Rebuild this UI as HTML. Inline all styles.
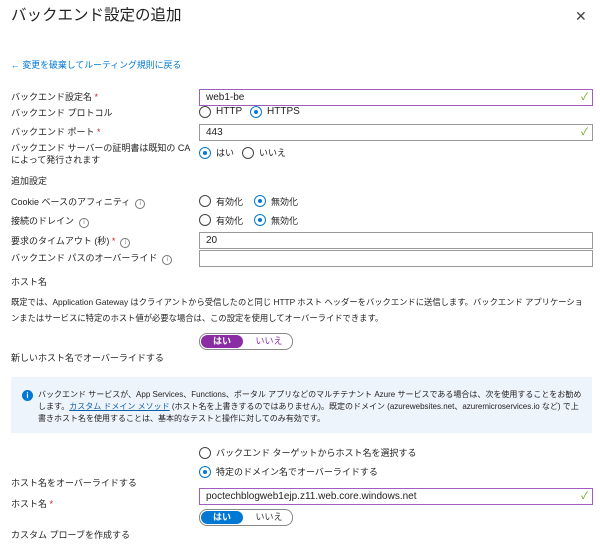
<!DOCTYPE html>
<html><head><meta charset="utf-8"><style>
body{margin:0;width:600px;height:552px;background:#fff;font-family:"Liberation Sans","Noto Sans CJK JP",sans-serif;color:#222;position:relative;overflow:hidden}
.a{position:absolute;white-space:nowrap;font-size:9px;line-height:12px}
.req{color:#c4262e}
.inp{position:absolute;left:199px;width:386px;height:15px;border:1px solid #999;font-size:10px;line-height:15px;padding-left:6px;box-sizing:content-box}
.chk{position:absolute;right:4px;top:0;color:#57a300;font-size:10px}
.r{position:absolute;width:12px;height:12px;border:1px solid #444;border-radius:50%;box-sizing:border-box}
.r.on{border-color:#0078d4}
.r.on::after{content:"";position:absolute;left:3px;top:3px;width:4px;height:4px;border-radius:50%;background:#0078d4}
.i{display:inline-block;width:8px;height:8px;border:1px solid #777;border-radius:50%;font-size:6px;line-height:8px;text-align:center;color:#777;margin-left:5px;vertical-align:0}
.tg{position:absolute;left:199px;width:92px;height:15px;border:1px solid #888;border-radius:8px;font-size:9px}
.tg span{position:absolute;top:1px;height:13px;line-height:13px;text-align:center;width:42px;border-radius:7px}
</style></head><body>
<div class="a" style="left:11px;top:5px;font-size:15.5px;line-height:22px;color:#222">バックエンド設定の追加</div>
<div class="a" style="left:575px;top:7px;font-size:14px;line-height:18px;color:#444">✕</div>
<div class="a" style="left:11px;top:59px;color:#0078d4;font-size:8.9px">← 変更を破棄してルーティング規則に戻る</div>

<div class="a" style="left:11px;top:91px">バックエンド設定名 <span class="req">*</span></div>
<div class="inp" style="top:89px;border-color:#a05cbf">web1-be<span class="chk">✓</span></div>

<div class="a" style="left:11px;top:107px">バックエンド プロトコル</div>
<div class="r" style="left:199px;top:106px"></div><div class="a" style="left:216px;top:106px;font-size:10px">HTTP</div>
<div class="r on" style="left:250px;top:106px"></div><div class="a" style="left:267px;top:106px;font-size:10px">HTTPS</div>

<div class="a" style="left:11px;top:126px">バックエンド ポート <span class="req">*</span></div>
<div class="inp" style="top:124px">443<span class="chk">✓</span></div>

<div class="a" style="left:11px;top:142px">バックエンド サーバーの証明書は既知の CA</div>
<div class="a" style="left:11px;top:154px">によって発行されます</div>
<div class="r on" style="left:199px;top:147px"></div><div class="a" style="left:216px;top:147px">はい</div>
<div class="r" style="left:242px;top:147px"></div><div class="a" style="left:259px;top:147px">いいえ</div>

<div class="a" style="left:11px;top:175px">追加設定</div>

<div class="a" style="left:11px;top:196px">Cookie ベースのアフィニティ<span class="i">i</span></div>
<div class="r" style="left:199px;top:195px"></div><div class="a" style="left:216px;top:196px">有効化</div>
<div class="r on" style="left:254px;top:195px"></div><div class="a" style="left:271px;top:196px">無効化</div>

<div class="a" style="left:11px;top:215px">接続のドレイン<span class="i">i</span></div>
<div class="r" style="left:199px;top:214px"></div><div class="a" style="left:216px;top:215px">有効化</div>
<div class="r on" style="left:254px;top:214px"></div><div class="a" style="left:271px;top:215px">無効化</div>

<div class="a" style="left:11px;top:235px">要求のタイムアウト (秒) <span class="req">*</span><span class="i">i</span></div>
<div class="inp" style="top:232px">20</div>
<div class="a" style="left:11px;top:252px">バックエンド パスのオーバーライド<span class="i">i</span></div>
<div class="inp" style="top:250px"></div>

<div class="a" style="left:11px;top:276px">ホスト名</div>
<div class="a" style="left:11px;top:296px;font-size:8.3px">既定では、Application Gateway はクライアントから受信したのと同じ HTTP ホスト ヘッダーをバックエンドに送信します。バックエンド アプリケーショ</div>
<div class="a" style="left:11px;top:312px;font-size:8.3px">ンまたはサービスに特定のホスト値が必要な場合は、この設定を使用してオーバーライドできます。</div>

<div class="tg" style="top:333px"><span style="left:1px;background:#8a2da5;color:#fff;font-weight:bold">はい</span><span style="left:48px;color:#8a2da5">いいえ</span></div>
<div class="a" style="left:11px;top:352px">新しいホスト名でオーバーライドする</div>

<div style="position:absolute;left:11px;top:377px;width:581px;height:56px;background:#eef4fc"></div>
<div style="position:absolute;left:22px;top:390px;width:11px;height:11px;border-radius:50%;background:#0078d4;color:#fff;font-size:8px;line-height:11px;text-align:center;font-weight:bold">i</div>
<div class="a" style="left:38px;top:389px;font-size:8px">バックエンド サービスが、App Services、Functions、ポータル アプリなどのマルチテナント Azure サービスである場合は、次を使用することをお勧め</div>
<div class="a" style="left:38px;top:401px;font-size:8px">します。<span style="color:#0f5fa8;text-decoration:underline">カスタム ドメイン メソッド</span> (ホスト名を上書きするのではありません)。既定のドメイン (azurewebsites.net、azuremicroservices.io など) で上</div>
<div class="a" style="left:38px;top:413px;font-size:8px">書きホスト名を使用することは、基本的なテストと操作に対してのみ有効です。</div>

<div class="r" style="left:199px;top:447px"></div><div class="a" style="left:216px;top:447px">バックエンド ターゲットからホスト名を選択する</div>
<div class="r on" style="left:199px;top:466px"></div><div class="a" style="left:216px;top:466px">特定のドメイン名でオーバーライドする</div>
<div class="a" style="left:11px;top:477px">ホスト名をオーバーライドする</div>

<div class="inp" style="top:488px;border-color:#a05cbf">poctechblogweb1ejp.z11.web.core.windows.net<span class="chk">✓</span></div>
<div class="a" style="left:11px;top:498px">ホスト名 <span class="req">*</span></div>

<div class="tg" style="top:509px"><span style="left:1px;background:#0078d4;color:#fff;font-weight:bold">はい</span><span style="left:48px;color:#333">いいえ</span></div>
<div class="a" style="left:11px;top:529px">カスタム プローブを作成する</div>
</body></html>
